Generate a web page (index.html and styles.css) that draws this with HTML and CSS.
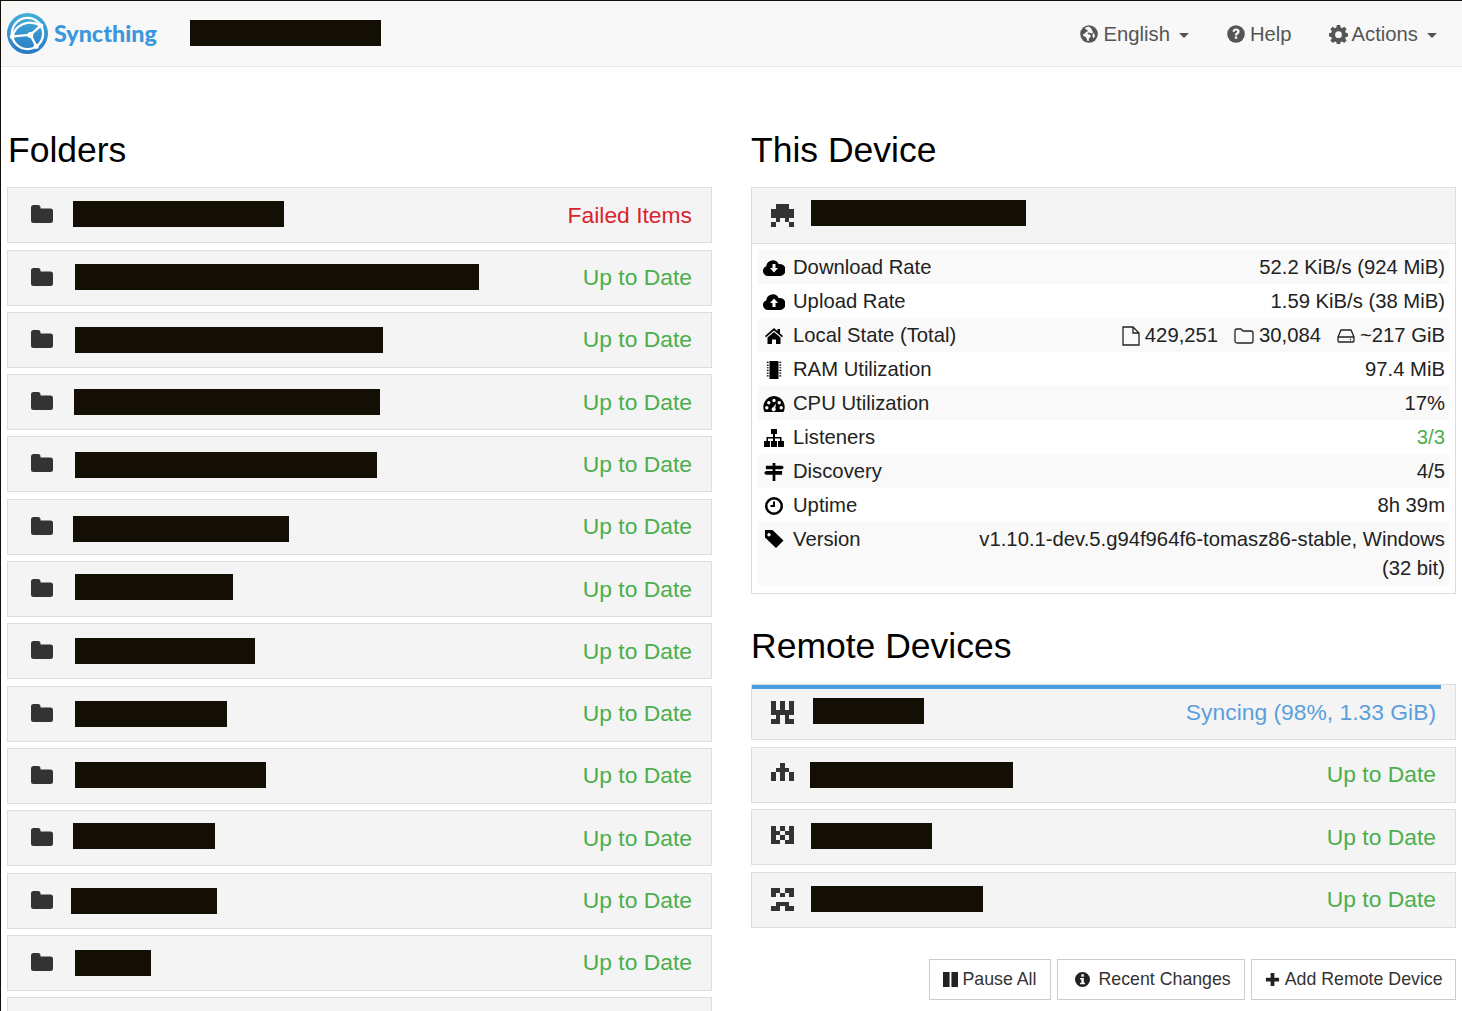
FILE: index.html
```html
<!DOCTYPE html>
<html lang="en">
<head>
<meta charset="utf-8">
<title>Syncthing</title>
<link rel="stylesheet" href="styles.css">
</head>
<body>
<svg class="defs" width="0" height="0" aria-hidden="true">
  <symbol id="folder" viewBox="0 0 22 18"><path d="M2.5 0h4.5a2.5 2.5 0 0 1 2.5 2.5V3.500h10a2.500 2.500 0 0 1 2.500 2.500v9.500a2.500 2.500 0 0 1-2.500 2.500h-17A2.500 2.500 0 0 1 0 15.500v-13A2.500 2.500 0 0 1 2.500 0z"/></symbol>
</svg>
<nav class="navbar">
  <a class="brand">
    <svg class="logo" viewBox="0 0 42 42"><defs><linearGradient id="lg" x1="0" y1="0" x2="0" y2="1"><stop offset="0" stop-color="#44b0d8"/><stop offset="1" stop-color="#2a78c4"/></linearGradient></defs><circle cx="21" cy="21" r="21" fill="url(#lg)"/><g fill="none" stroke="#fff" stroke-width="2.400"><circle cx="21" cy="21" r="16"/><path d="M5.500 24 L24 22.500 L34.500 13 M24 22.500 L30 34 M5.500 24 C8 14 20 5 34.500 13"/></g><g fill="#fff"><circle cx="5.500" cy="24" r="2.600"/><circle cx="24" cy="22.500" r="3"/><circle cx="34.500" cy="13" r="2.600"/><circle cx="30" cy="34" r="2.600"/></g></svg>
    <span class="brand-text">Syncthing</span>
  </a>
  <span class="redact r-nav"></span>
  <div class="nav-right">
    <a class="nav-item"><svg class="ni" viewBox="0 0 18 18"><circle cx="9" cy="9" r="8.800"/><path fill="#f8f8f8" d="M9 1.800c-1.500 0-3 .5-4.100 1.300l1 1.400 1.600.4.200 1.500-1.800.6-.9 1.500L3 9.200l.5 2 2.300.7 1 2 .6 2.200 1.300-.1.300-2.700 1.800-1.600-.5-1.800-2.400-.8-.7-1.200 1.700-.3 2.700 1 1.700-1.200-1.300-2.200-.9-1.900z M14 8l1 3-1.500 2.500-.8-1.800-.2-2.500z"/></svg><span>English</span><i class="caret"></i></a>
    <a class="nav-item help"><svg class="ni" viewBox="0 0 18 18"><circle cx="9" cy="9" r="8.800"/><path fill="#f8f8f8" d="M7.800 11.400h2.400v2.300H7.800zM5.500 6.500C5.800 4.600 7.200 3.600 9.100 3.600c2 0 3.500 1.200 3.500 3 0 2.600-2.500 2.400-2.400 4H7.900c-.2-2.700 2.200-2.700 2.200-4 0-.6-.5-1-1.100-1-.7 0-1.200.4-1.400 1.300z"/></svg><span>Help</span></a>
    <a class="nav-item last"><svg class="ni" viewBox="0 0 18 18"><path fill-rule="evenodd" d="M7.400 0h3.200l.4 2.400 1.400.6 2-1.400 2.300 2.300-1.400 2 .6 1.400 2.100.4v3.200l-2.100.4-.6 1.400 1.400 2-2.300 2.300-2-1.400-1.400.6-.4 2.100H7.400L7 16.200l-1.400-.6-2 1.400-2.300-2.300 1.400-2-.6-1.400L0 10.900V7.700l2.100-.4.6-1.400-1.400-2 2.300-2.300 2 1.400L7 2.400zM9 6a3.200 3.200 0 1 0 0 6.400A3.200 3.200 0 0 0 9 6z"/></svg><span>Actions</span><i class="caret"></i></a>
  </div>
</nav>
<main class="columns">
  <section class="col">
    <h1 class="title">Folders</h1>
    <div class="panel"><svg class="folder"><use href="#folder"/></svg><span class="redact f1"></span><span class="status red">Failed Items</span></div>
    <div class="panel"><svg class="folder"><use href="#folder"/></svg><span class="redact f2"></span><span class="status green">Up to Date</span></div>
    <div class="panel"><svg class="folder"><use href="#folder"/></svg><span class="redact f3"></span><span class="status green">Up to Date</span></div>
    <div class="panel"><svg class="folder"><use href="#folder"/></svg><span class="redact f4"></span><span class="status green">Up to Date</span></div>
    <div class="panel"><svg class="folder"><use href="#folder"/></svg><span class="redact f5"></span><span class="status green">Up to Date</span></div>
    <div class="panel"><svg class="folder"><use href="#folder"/></svg><span class="redact f6"></span><span class="status green">Up to Date</span></div>
    <div class="panel"><svg class="folder"><use href="#folder"/></svg><span class="redact f7"></span><span class="status green">Up to Date</span></div>
    <div class="panel"><svg class="folder"><use href="#folder"/></svg><span class="redact f8"></span><span class="status green">Up to Date</span></div>
    <div class="panel"><svg class="folder"><use href="#folder"/></svg><span class="redact f9"></span><span class="status green">Up to Date</span></div>
    <div class="panel"><svg class="folder"><use href="#folder"/></svg><span class="redact f10"></span><span class="status green">Up to Date</span></div>
    <div class="panel"><svg class="folder"><use href="#folder"/></svg><span class="redact f11"></span><span class="status green">Up to Date</span></div>
    <div class="panel"><svg class="folder"><use href="#folder"/></svg><span class="redact f12"></span><span class="status green">Up to Date</span></div>
    <div class="panel"><svg class="folder"><use href="#folder"/></svg><span class="redact f13"></span><span class="status green">Up to Date</span></div>
    <div class="panel"></div>
  </section>
  <section class="col">
    <h1 class="title">This Device</h1>
    <div class="device">
      <div class="device-head">
        <svg class="ident" viewBox="0 0 5 5" shape-rendering="crispEdges"><path d="M1 0h3v1h1v2H4v1H3V3H2v1H1V3H0V1h1zM0 4h1v1H0zM4 4h1v1H4z"/></svg>
        <span class="redact d0"></span>
      </div>
      <div class="device-body">
        <div class="row odd"><span class="label"><svg class="ri" viewBox="0 0 22 16"><path fill-rule="evenodd" d="M5 16a5 5 0 0 1-1.700-9.700A6.500 6.500 0 0 1 15.600 4 5.800 5.800 0 0 1 17.500 16zM9.500 4v4H7l4 4.500L15 8h-2.500V4z"/></svg>Download Rate</span><span class="val">52.2 KiB/s (924 MiB)</span></div>
        <div class="row"><span class="label"><svg class="ri" viewBox="0 0 22 16"><path fill-rule="evenodd" d="M5 16a5 5 0 0 1-1.700-9.700A6.500 6.500 0 0 1 15.600 4 5.800 5.800 0 0 1 17.500 16zM9.500 13V9H7l4-4.500L15 9h-2.500v4z"/></svg>Upload Rate</span><span class="val">1.59 KiB/s (38 MiB)</span></div>
        <div class="row odd"><span class="label"><svg class="ri" viewBox="0 0 22 16"><path d="M11 0l3.500 3V1h2.500v4.200L20 8l-1 1.200L11 2.600 3 9.200 2 8zM4.500 9.500L11 4l6.500 5.500V16H13v-4.500H9V16H4.500z"/></svg>Local State (Total)</span>
          <span class="val multi">
            <span class="stat"><svg class="oi file" viewBox="0 0 18 20"><path d="M1 1h10l6 6v12H1zM11 1v6h6"/></svg>429,251</span>
            <span class="stat"><svg class="oi fold" viewBox="0 0 20 16"><path d="M1 3a2 2 0 0 1 2-2h4l2 2h8a2 2 0 0 1 2 2v8a2 2 0 0 1-2 2H3a2 2 0 0 1-2-2z"/></svg>30,084</span>
            <span class="stat"><svg class="oi hdd" viewBox="0 0 18 14"><path d="M1 8l3-7h10l3 7v4a1 1 0 0 1-1 1H2a1 1 0 0 1-1-1zM1 8h16M13 10.500h1"/></svg>~217 GiB</span>
          </span></div>
        <div class="row"><span class="label"><svg class="ri" viewBox="0 0 22 20"><path d="M6 0h10v20H6z"/><path d="M3 1.500h2M3 4.500h2M3 7.500h2M3 10.500h2M3 13.500h2M3 16.500h2M17 1.500h2M17 4.500h2M17 7.500h2M17 10.500h2M17 13.500h2M17 16.500h2" stroke="#000" stroke-width="1.300"/></svg>RAM Utilization</span><span class="val">97.4 MiB</span></div>
        <div class="row odd"><span class="label"><svg class="ri" viewBox="0 0 22 16"><path fill-rule="evenodd" d="M11 0a11 11 0 0 1 9.500 16h-19A11 11 0 0 1 11 0zM11 2.800a1.700 1.700 0 1 0 0 3.400 1.700 1.700 0 0 0 0-3.400zM5.800 5a1.700 1.700 0 1 0 0 3.400 1.700 1.700 0 0 0 0-3.400zM16.200 5a1.700 1.700 0 1 0 0 3.400 1.700 1.700 0 0 0 0-3.400zM3.800 10a1.700 1.700 0 1 0 0 3.400 1.700 1.700 0 0 0 0-3.400zM18.200 10a1.700 1.700 0 1 0 0 3.400 1.700 1.700 0 0 0 0-3.400zM13 7.500l-2.700 3.800a2 2 0 1 0 2 .8z"/></svg>CPU Utilization</span><span class="val">17%</span></div>
        <div class="row"><span class="label"><svg class="ri" viewBox="0 0 22 18"><path d="M8 0h6v5h-2v3h6.500v4H21v6h-6v-6h2V9.500h-5V12h2v6H8v-6h2V9.500H5V12h2v6H1v-6h2.500V8H10V5H8z"/></svg>Listeners</span><span class="val green">3/3</span></div>
        <div class="row odd"><span class="label"><svg class="ri" viewBox="0 0 22 20"><path d="M9.500 0h3v3H20l2 2-2 2h-7.500v2H20v4h-7.500v7h-3v-7H2l-2-2 2-2h7.500V7H2V3h7.500z"/></svg>Discovery</span><span class="val">4/5</span></div>
        <div class="row"><span class="label"><svg class="ri" viewBox="0 0 22 18"><path fill-rule="evenodd" d="M11 0a9 9 0 1 1 0 18 9 9 0 0 1 0-18zM11 2.500a6.500 6.500 0 1 0 0 13 6.500 6.500 0 0 0 0-13zM10 4.500h2V10H7.500V8H10z"/></svg>Uptime</span><span class="val">8h 39m</span></div>
        <div class="row odd tall"><span class="label"><svg class="ri up" viewBox="0 0 22 18"><path fill-rule="evenodd" d="M2 0h7.500L20.500 10.500 13 18 2 7.500zM6 3a1.700 1.700 0 1 0 0 3.400A1.700 1.700 0 0 0 6 3z"/></svg>Version</span><span class="val wrap">v1.10.1-dev.5.g94f964f6-tomasz86-stable, Windows (32 bit)</span></div>
      </div>
    </div>
    <h1 class="title remote">Remote Devices</h1>
    <div class="panel rpanel syncing">
      <span class="progress" style="width: 98%"></span>
      <svg class="ident" viewBox="0 0 5 5" shape-rendering="crispEdges"><path d="M0 0h1v2h1V0h1v2h1V0h1v3H4v1H3V3H2v1H1V3H0zM0 4h2v1H0zM3 4h2v1H3z"/></svg>
      <span class="redact d1"></span><span class="status blue">Syncing (98%, 1.33 GiB)</span>
    </div>
    <div class="panel rpanel">
      <svg class="ident" viewBox="0 0 5 5" shape-rendering="crispEdges"><path d="M2 0h1v1h1v1h1v2H4V2H3v2H2V2H1v2H0V2h1V1h1z"/></svg>
      <span class="redact d2"></span><span class="status green">Up to Date</span>
    </div>
    <div class="panel rpanel">
      <svg class="ident" viewBox="0 0 5 5" shape-rendering="crispEdges"><path d="M0 0h1v1H0zM2 0h1v1H2zM4 0h1v1H4zM0 1h2v1H0zM3 1h2v1H3zM0 2h1v1H0zM2 2h1v1H2zM4 2h1v1H4zM0 3h2v1H0zM3 3h2v1H3z"/></svg>
      <span class="redact d3"></span><span class="status green">Up to Date</span>
    </div>
    <div class="panel rpanel">
      <svg class="ident" viewBox="0 0 5 5" shape-rendering="crispEdges"><path d="M0 0h2v1h1V0h2v2H4V1H3v1H2V1H1v1H0zM1 3h3v1h1v1H3V4H2v1H0V4h1z"/></svg>
      <span class="redact d4"></span><span class="status green">Up to Date</span>
    </div>
    <div class="actions">
      <a class="btn"><svg class="bi" viewBox="0 0 16 16"><path d="M0 0h7v16H0zM9 0h7v16H9z"/></svg>Pause All</a>
      <a class="btn wide"><svg class="bi" viewBox="0 0 16 16"><path fill-rule="evenodd" d="M8 0a8 8 0 1 1 0 16A8 8 0 0 1 8 0zM6.800 2.500v2.500h2.600V2.500zM5.500 6.500V8h1.300v3.500H5.500V13h5.200v-1.500H9.400v-5z"/></svg>Recent Changes</a>
      <a class="btn add"><svg class="bi" viewBox="0 0 16 16"><path d="M6 1h4v5h5v4h-5v5H6v-5H1V6h5z"/></svg>Add Remote Device</a>
    </div>
  </section>
</main>
</body>
</html>
```
FILE: styles.css
```css
* { box-sizing: border-box; }
html, body { margin: 0; height: 1011px; overflow: hidden; }
body {
  background: #fff;
  border-top: 1px solid #140f05;
  border-left: 1px solid #140f05;
  font-family: "Liberation Sans", Arial, sans-serif;
  font-size: 20.25px;
  color: #000;
}
.defs { position: absolute; }
.navbar {
  height: 66px;
  background: #f8f8f8;
  border-bottom: 1px solid #e7e7e7;
  display: flex;
  align-items: center;
  padding-left: 6px;
}
.brand { display: flex; align-items: center; width: 183px; }
.logo { width: 41px; height: 41px; flex: none; margin-top: -1px; }
.brand-text {
  margin: -2px 0 0 6px;
  font-family: Lato, sans-serif;
  font-weight: 900;
  font-size: 23.3px;
  color: #3b97dc;
}
.redact { display: block; background: #140f05; height: 26px; flex: none; }
.r-nav { width: 191px; margin-top: -2px; }
.nav-right { margin-left: auto; display: flex; align-items: center; color: #555; padding: 1px 25px 0 0; }
.nav-item { display: flex; align-items: center; margin-left: 37px; }
.nav-item.help { margin-left: 38px; }
.ni { width: 18px; height: 18px; fill: #555; margin-right: 6px; }
.help .ni { margin-right: 5px; }
.last .ni { width: 19px; height: 19px; margin-right: 4px; }
.caret {
  width: 0; height: 0; margin-left: 9px; margin-top: 2px;
  border-left: 5px solid transparent; border-right: 5px solid transparent; border-top: 5px solid #555;
}
.columns { display: flex; padding: 0 6px; gap: 39px; }
.col { width: 705px; flex: none; }
.title { margin: 63px 0 17.28px; font-size: 35.5px; line-height: 40px; font-weight: 400; height: 40px; padding-left: 1px; }
.title.remote { margin: 31.5px 0 18.5px; padding-left: 0; }
.col + .col .title { padding-left: 0; }
.panel {
  height: 56px;
  margin-bottom: 6.3px;
  background: #f4f4f4;
  border: 1px solid #ddd;
  display: flex;
  align-items: center;
  padding: 0 19px 0 23px;
  font-size: 22.85px;
}
.folder { width: 22px; height: 18px; fill: #333; margin-right: 20px; margin-top: -2px; flex: none; }
.status { margin-left: auto; }
.red { color: #d9232e; }
.green { color: #4cae4c; }
.blue { color: #5b9fdc; }
.f1 { width: 211px; margin-top: -2px; }
.f2 { width: 404px; margin-left: 2px; margin-top: -2px; }
.f3 { width: 308px; margin-left: 2px; }
.f4 { width: 306px; margin-left: 1px; }
.f5 { width: 302px; margin-left: 2px; margin-top: 2px; }
.f6 { width: 216px; margin-top: 4px; }
.f7 { width: 158px; margin-left: 2px; margin-top: -4px; }
.f8 { width: 180px; margin-left: 2px; }
.f9 { width: 152px; margin-left: 2px; }
.f10 { width: 191px; margin-left: 2px; margin-top: -2px; }
.f11 { width: 142px; margin-top: -4px; }
.f12 { width: 146px; margin-left: -2px; }
.f13 { width: 76px; margin-left: 2px; }
.device { border: 1px solid #ddd; height: 407px; }
.device-head {
  height: 56px;
  background: #f4f4f4;
  border-bottom: 1px solid #ddd;
  display: flex;
  align-items: center;
  padding-left: 19px;
}
.ident { width: 23px; height: 23px; fill: #333; flex: none; margin-right: 17px; }
.d0 { width: 215px; margin-top: -5px; }
.device-body { padding: 6px 6px 0; }
.row {
  min-height: 34px;
  display: flex;
  justify-content: space-between;
  align-items: flex-start;
  padding: 3px 4px 0 5px;
  line-height: 29px;
  color: #222;
}
.row.odd { background: #f9f9f9; }
.row.tall { height: 64px; }
.label { display: flex; align-items: center; flex: none; }
.ri { width: 22px; height: 18px; margin-right: 8px; flex: none; fill: #000; }
.ri.up { margin-top: -2px; }
.val { color: #222; text-align: right; }
.val.green { color: #4cae4c; }
.wrap { margin-left: 110px; }
.multi { display: flex; gap: 16px; }
.stat { display: flex; align-items: center; }
.oi { fill: none; stroke: #222; stroke-width: 1.300; margin-right: 5px; }
.file { width: 18px; height: 20px; }
.fold { width: 20px; height: 16px; }
.hdd { width: 18px; height: 14px; }
.panel.rpanel { padding: 0 19px; margin-bottom: 6.5px; }
.syncing { position: relative; }
.progress { position: absolute; left: 0; top: 0; height: 4px; background: #4a9ede; }
.d1 { width: 111px; margin-left: 2px; margin-top: -2px; }
.d2 { width: 203px; margin-left: -1px; }
.d3 { width: 121px; margin-top: -2px; }
.d4 { width: 172px; margin-top: -2px; }
.actions { display: flex; justify-content: flex-end; gap: 6px; margin-top: 31.2px; }
.btn {
  height: 41px;
  display: flex; align-items: center;
  border: 1px solid #ccc;
  background: #fff;
  padding: 0 13px;
  font-size: 17.75px;
  color: #333;
}
.btn.add { padding-right: 12.4px; }
.bi { width: 15px; height: 15px; fill: #222; margin-right: 5px; flex: none; }
.wide { padding: 0 13px 0 17px; }
.wide .bi { margin-right: 9px; }
```
